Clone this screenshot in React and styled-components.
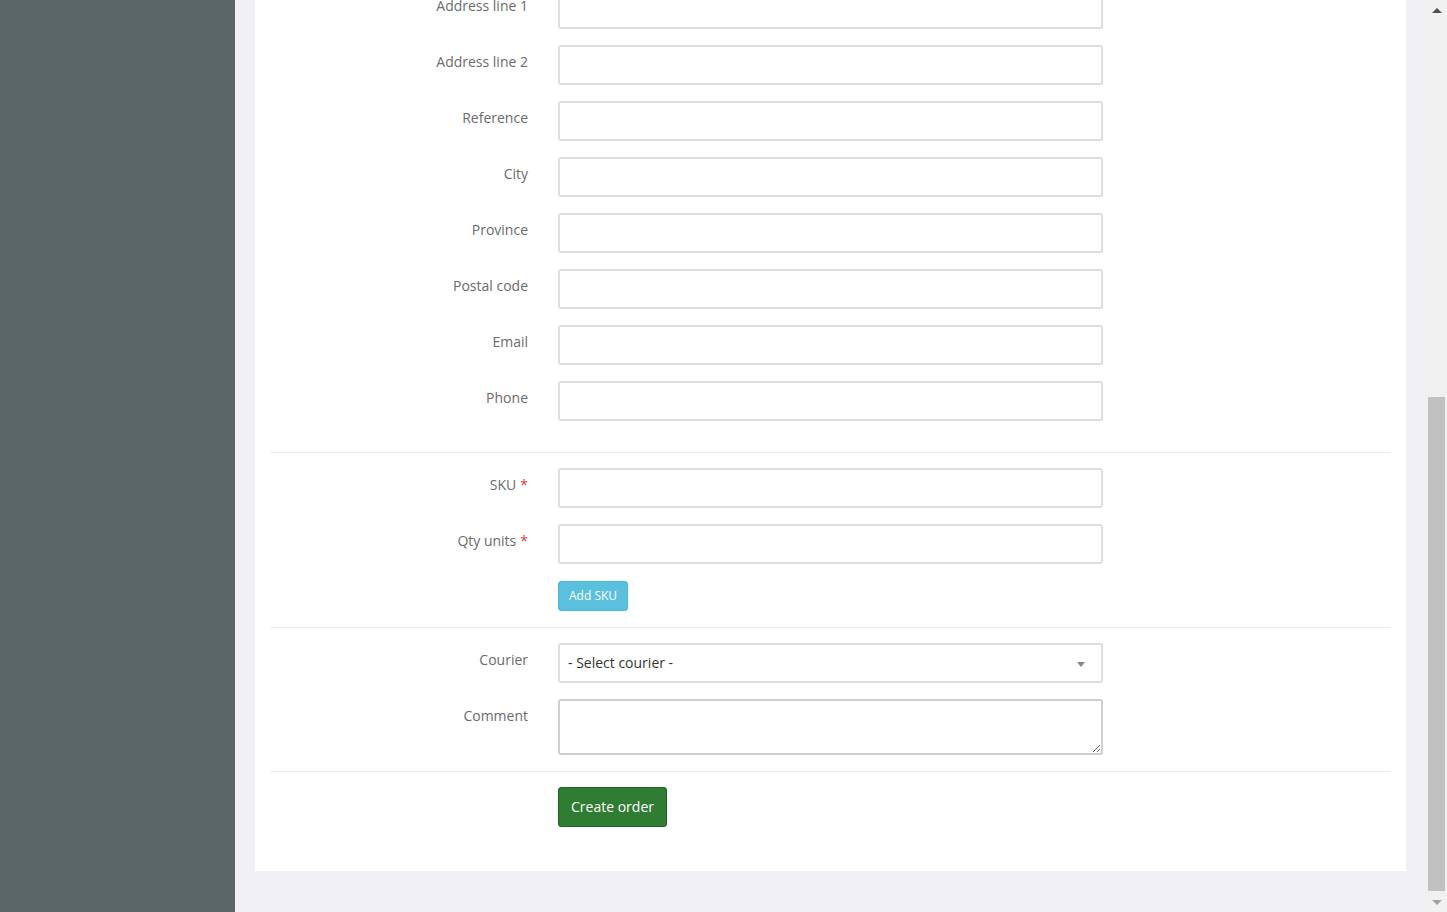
import React, { useLayoutEffect, useRef } from "react";
import styled, { createGlobalStyle } from "styled-components";

const Global = createGlobalStyle`
  html, body { margin: 0; padding: 0; height: 100%; overflow: hidden; }
  body { font-family: "Open Sans", "Liberation Sans", sans-serif; font-size: 14px; color: #333; }
  * { box-sizing: border-box; }
`;

const Frame = styled.div`
  display: flex;
  height: 100vh;
`;

const Viewport = styled.div`
  flex: 1;
  overflow-y: scroll;
  scrollbar-width: none;
  &::-webkit-scrollbar { display: none; }
`;

/* classic window scrollbar, parked at the bottom of the page */
const ScrollBar = styled.div`
  flex: 0 0 20px;
  display: flex;
  flex-direction: column;
  background: #f1f1f1;
`;

const ArrowButton = styled.div`
  flex: 0 0 20px;
  display: flex;
  align-items: center;
  justify-content: center;
`;

const Arrow = styled.span`
  width: 0;
  height: 0;
  border-left: 5px solid transparent;
  border-right: 5px solid transparent;
  ${(p) =>
    p.$dir === "up"
      ? `border-bottom: 5px solid ${p.$dim ? "#a3a3a3" : "#505050"};`
      : `border-top: 5px solid ${p.$dim ? "#a3a3a3" : "#505050"};`}
`;

const Track = styled.div`
  flex: 1;
  display: flex;
  flex-direction: column;
  justify-content: flex-end;
  padding-bottom: 1px;
`;

const Thumb = styled.div`
  height: 494px;
  width: 17px;
  margin-left: 1px;
  background: #c1c1c1;
`;

const Layout = styled.div`
  display: flex;
  min-height: 100%;
`;

const Sidebar = styled.aside`
  flex: 0 0 235px;
  background: #5b6767;
`;

const Main = styled.main`
  flex: 1;
  background: #f0f0f5;
  padding: 20px 21px 41px 20px;
`;

const PageTitle = styled.h1`
  margin: 0 0 20px;
  font-size: 24px;
  font-weight: 400;
  color: #555;
  line-height: 33px;
`;

const Card = styled.div`
  background: #fff;
  padding: 0 15px 28px;
`;

const Section = styled.div`
  padding: 15px 0 ${(p) => (p.$spacious ? "15px" : "0")};
  border-top: ${(p) => (p.$first ? "none" : "1px solid #ececec")};
`;

const Row = styled.div`
  display: grid;
  grid-template-columns: 258px 545px;
  column-gap: 30px;
  margin-bottom: 16px;
  padding-top: ${(p) => (p.$nudge ? "1px" : "0")};
`;

const Label = styled.label`
  text-align: right;
  padding-top: 7px;
  line-height: 20px;
  color: #6b6b6b;
  font-size: 14px;
`;

const Req = styled.span`
  color: #d9403a;
  margin-left: 4px;
`;

const Input = styled.input`
  display: block;
  width: 100%;
  height: 40px;
  border: 2px solid #dedede;
  border-radius: 3px;
  padding: 8px 10px;
  font: inherit;
  color: #333;
  background: #fff;
  outline: none;
`;

const TextArea = styled.textarea`
  display: block;
  width: 100%;
  height: 56px;
  border: 2px solid #cfcfcf;
  border-radius: 3px;
  padding: 8px 10px;
  font: inherit;
  resize: vertical;
  outline: none;
`;

const SelectBox = styled.div`
  height: 40px;
  border: 2px solid #dedede;
  border-radius: 3px;
  display: flex;
  align-items: center;
  justify-content: space-between;
  padding: 0 16px 0 8px;
  color: #333;
  line-height: 20px;
  background: #fff;
`;

const Caret = styled.span`
  width: 0;
  height: 0;
  border-left: 4px solid transparent;
  border-right: 4px solid transparent;
  border-top: 5px solid #888;
  margin-top: 2px;
`;

const Button = styled.button`
  font-family: inherit;
  color: #fff;
  border-radius: 3px;
  cursor: pointer;
  background: ${(p) => (p.$variant === "info" ? "#5bc0de" : "#2e7d32")};
  border: 1px solid ${(p) => (p.$variant === "info" ? "#46b8da" : "#23602a")};
  font-size: ${(p) => (p.$variant === "info" ? "12px" : "14px")};
  line-height: ${(p) => (p.$variant === "info" ? "18px" : "20px")};
  padding: ${(p) => (p.$variant === "info" ? "5px 10px" : "9px 12px")};
`;

const Actions = styled.div`
  grid-column: 2;
  display: flex;
`;

function Field({ label, required, children }) {
  return (
    <Row>
      <Label>
        {label}
        {required && <Req>*</Req>}
      </Label>
      {children || <Input type="text" />}
    </Row>
  );
}

export default function App() {
  const view = useRef(null);
  useLayoutEffect(() => {
    const el = view.current;
    if (el) el.scrollTop = el.scrollHeight;
  }, []);

  return (
    <>
      <Global />
      <Frame>
        <Viewport ref={view}>
          <Layout>
            <Sidebar />
            <Main>
              <PageTitle>New order</PageTitle>
              <Card>
                <Section $first $spacious>
                  <Field label="Client" required />
                  <Field label="Warehouse" required />
                  <Field label="Order number" required />
                </Section>
                <Section $spacious>
                  <Field label="Name" />
                  <Field label="Company" />
                  <Field label="Contact person" />
                  <Field label="Country" />
                  <Field label="Address line 1" />
                  <Field label="Address line 2" />
                  <Field label="Reference" />
                  <Field label="City" />
                  <Field label="Province" />
                  <Field label="Postal code" />
                  <Field label="Email" />
                  <Field label="Phone" />
                </Section>
                <Section>
                  <Field label="SKU" required />
                  <Field label="Qty units" required />
                  <Row $nudge>
                    <Actions>
                      <Button type="button" $variant="info">Add SKU</Button>
                    </Actions>
                  </Row>
                </Section>
                <Section>
                  <Field label="Courier">
                    <SelectBox>
                      <span>- Select courier -</span>
                      <Caret />
                    </SelectBox>
                  </Field>
                  <Field label="Comment">
                    <TextArea />
                  </Field>
                </Section>
                <Section>
                  <Row>
                    <Actions>
                      <Button type="button">Create order</Button>
                    </Actions>
                  </Row>
                </Section>
              </Card>
            </Main>
          </Layout>
        </Viewport>
        <ScrollBar>
          <ArrowButton>
            <Arrow $dir="up" />
          </ArrowButton>
          <Track>
            <Thumb />
          </Track>
          <ArrowButton>
            <Arrow $dir="down" $dim />
          </ArrowButton>
        </ScrollBar>
      </Frame>
    </>
  );
}
